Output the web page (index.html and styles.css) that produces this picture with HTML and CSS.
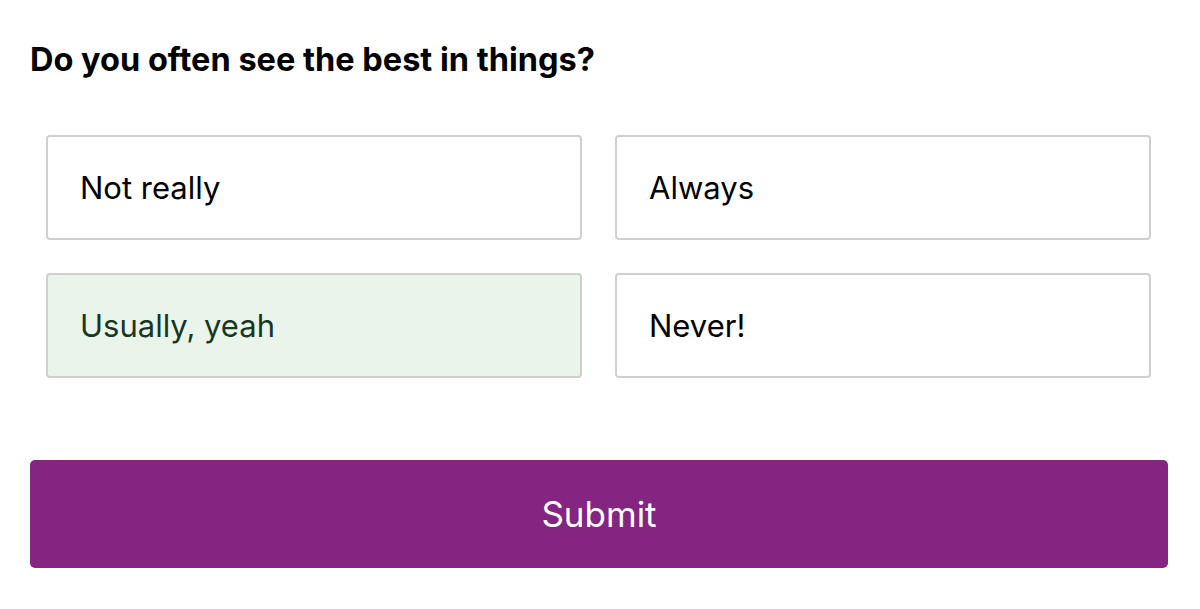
FILE: index.html
```html
<!DOCTYPE html>
<html lang="en">
<head>
<meta charset="utf-8">
<title>Question</title>
<link rel="stylesheet" href="styles.css">
</head>
<body>
<main class="quiz">
  <h1 class="question">Do you often see the best in things?</h1>
  <div class="options">
    <button class="option">Not really</button>
    <button class="option">Always</button>
    <button class="option option--selected">Usually, yeah</button>
    <button class="option">Never!</button>
  </div>
  <button class="submit">Submit</button>
</main>
</body>
</html>
```
FILE: styles.css
```css
html, body {
  margin: 0;
  padding: 0;
  background: #ffffff;
}

body {
  font-family: Inter, "Liberation Sans", Arial, sans-serif;
  color: #000;
}

.quiz {
  padding: 40px 32px 0 30px;
}

.question {
  margin: 0;
  font-size: 32.5px;
  line-height: 40px;
  font-weight: 700;
  letter-spacing: 0;
}

.options {
  display: grid;
  grid-template-columns: 1fr 1fr;
  column-gap: 33px;
  row-gap: 33px;
  margin: 55px 17px 0 16px;
}

.option {
  height: 105px;
  box-sizing: border-box;
  border: 2px solid #cfcfcf;
  border-radius: 4px;
  background: #fff;
  font-family: inherit;
  font-size: 31px;
  color: #000;
  text-align: left;
  padding: 0 0 0 32px;
  cursor: pointer;
}

.option--selected {
  background: #e9f5ea;
  color: #1a3523;
}

.submit {
  display: block;
  width: 100%;
  height: 108px;
  margin-top: 82px;
  border: none;
  border-radius: 5px;
  background: #842582;
  color: #fff;
  font-family: inherit;
  font-size: 35px;
  cursor: pointer;
}
```
